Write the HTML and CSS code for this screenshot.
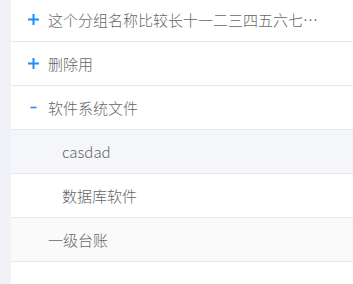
FILE: index.html
```html
<!DOCTYPE html>
<html lang="zh-CN">
<head>
    <meta charset="UTF-8">
    <meta name="viewport" content="width=device-width, initial-scale=1.0">
    <title>分组列表</title>
    <link rel="stylesheet" href="styles.css">
</head>
<body>
    <div class="page">
        <div class="side-strip"></div>
        <ul class="group-list">
            <li class="group-item">
                <span class="toggle">
                    <svg width="11" height="11" viewBox="0 0 11 11"><path d="M0 5.5h11M5.5 0v11" stroke="#1890ff" stroke-width="2"/></svg>
                </span>
                <span class="group-name">这个分组名称比较长十一二三四五六七八九十</span>
            </li>
            <li class="group-item">
                <span class="toggle">
                    <svg width="11" height="11" viewBox="0 0 11 11"><path d="M0 5.5h11M5.5 0v11" stroke="#1890ff" stroke-width="2"/></svg>
                </span>
                <span class="group-name">删除用</span>
            </li>
            <li class="group-item">
                <span class="toggle">
                    <svg width="11" height="11" viewBox="0 0 11 11"><path d="M2.5 5.5h6" stroke="#1890ff" stroke-width="1.6"/></svg>
                </span>
                <span class="group-name">软件系统文件</span>
            </li>
            <li class="group-item sub-item active">
                <span class="group-name">casdad</span>
            </li>
            <li class="group-item sub-item">
                <span class="group-name">数据库软件</span>
            </li>
            <li class="group-item plain-item">
                <span class="group-name">一级台账</span>
            </li>
        </ul>
    </div>
</body>
</html>
```

FILE: styles.css
```css
body {
    margin: 0;
    padding: 0;
    font-family: "Noto Sans CJK SC", "Liberation Sans", sans-serif;
    background-color: #fff;
    overflow: hidden;
}

.page {
    display: flex;
    min-height: 100vh;
}

.side-strip {
    width: 11px;
    flex-shrink: 0;
    background-color: #f0f2f7;
}

.group-list {
    flex: 1;
    min-width: 0;
    list-style: none;
    margin: -2px 0 0 0;
    padding: 0;
}

.group-item {
    display: flex;
    align-items: center;
    height: 43px;
    padding: 0 26px 0 17px;
    border-bottom: 1px solid #e8e8e8;
    font-size: 15px;
    font-weight: 300;
    color: #666;
}

.toggle {
    display: flex;
    align-items: center;
    width: 11px;
    height: 11px;
    margin-right: 9px;
    flex-shrink: 0;
}

.group-name {
    white-space: nowrap;
    overflow: hidden;
    text-overflow: ellipsis;
}

.sub-item {
    padding-left: 51px;
}

.sub-item.active {
    background-color: #f5f6fa;
}

.plain-item {
    padding-left: 37px;
    background-color: #fafafa;
}
```
